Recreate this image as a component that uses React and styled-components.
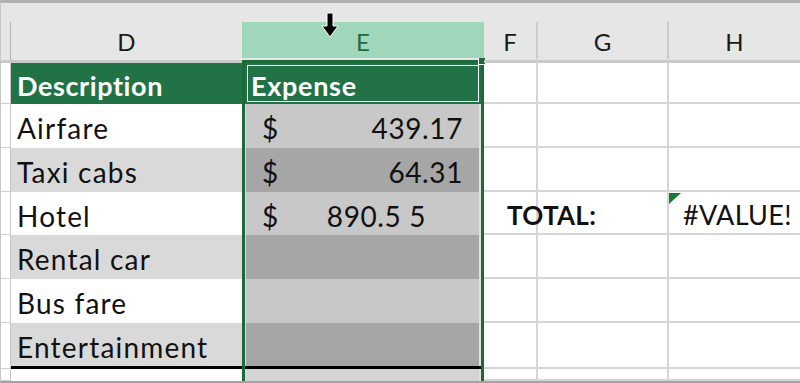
import React from 'react';
import styled, { createGlobalStyle } from 'styled-components';

const GREEN = '#217346';
const SEL = '#1b6a3a';
const GRID = '#d6d6d6';

const Global = createGlobalStyle`
  html, body { margin: 0; padding: 0; background: #fff; }
  body { font-family: Lato, "Open Sans", sans-serif; }
`;

const Frame = styled.div`
  width: 800px;
  height: 383px;
  box-sizing: border-box;
  border-top: 3px solid #b2b2b2;
  border-bottom: 2px solid #a4a4a4;
  border-left: 1px solid #c6c6c6;
  background: #fff;
  overflow: hidden;
`;

const Sheet = styled.div`
  display: grid;
  grid-template-columns: 10px 231px 242px 54px 131px 131px;
  grid-template-rows: 19px 38px 44px 44px 44px 43px 44px 44px 46px 12px;
`;

const Band = styled.div`
  grid-column: 1 / -1;
  background: #e6e6e6;
`;

const Corner = styled.div`
  background: #e6e6e6;
  border-right: 1px solid #b4b4b4;
`;

const Letter = styled.div`
  position: relative;
  display: flex;
  align-items: center;
  justify-content: center;
  padding-top: 4px;
  box-sizing: border-box;
  font-size: 24px;
  line-height: 1;
  background: ${(p) => (p.$active ? '#a0d6b9' : '#e6e6e6')};
  color: ${(p) => (p.$active ? '#1e6b3f' : '#1a1a1a')};
  border-right: ${(p) => (p.$sep ? '2px solid #cacaca' : 'none')};
  border-bottom: 2px solid #e6e6e6;
`;

const Cursor = styled.svg`
  position: absolute;
  left: 79px;
  top: -10px;
`;

const Stub = styled.div`
  background: #fff;
  border-right: 1px solid #c8c8c8;
  box-shadow: inset 0 -1px 0 #cfcfcf;
  border-top: ${(p) => (p.$head ? '3px solid #c9c9c9' : 'none')};
`;

const Text = styled.div`
  display: flex;
  align-items: center;
  box-sizing: border-box;
  padding-top: 4px;
  font-size: 28px;
  letter-spacing: 1.2px;
  line-height: 1;
  white-space: nowrap;
  color: #111;
`;

const Desc = styled(Text)`
  padding-left: 6px;
  background: ${(p) => (p.$head ? GREEN : p.$band ? '#d9d9d9' : '#fff')};
  color: ${(p) => (p.$head ? '#fff' : '#111')};
  font-weight: ${(p) => (p.$head ? 700 : 400)};
  font-size: ${(p) => (p.$head ? '27px' : '28px')};
  letter-spacing: ${(p) => (p.$head ? '0.6px' : '1.2px')};
  border-top: ${(p) => (p.$head ? '3px solid #c9c9c9' : 'none')};
  border-bottom: ${(p) => (p.$last ? '3px solid #000' : 'none')};
`;

const tones = {
  head: GREEN,
  light: '#c8c8c8',
  dark: '#a6a6a6',
  pale: '#d4d4d4',
};

const edgeShade = 'inset 1px 0 0 #d8d8d8, inset -2px 0 0 #e2e2e2';

const Expense = styled(Text)`
  position: relative;
  border-left: 3px solid ${SEL};
  border-right: 3px solid ${SEL};
  border-top: ${(p) => (p.$tone === 'head' ? `3px solid ${SEL}` : 'none')};
  background: ${(p) => tones[p.$tone]};
  color: ${(p) => (p.$tone === 'head' ? '#fff' : '#111')};
  font-weight: ${(p) => (p.$tone === 'head' ? 700 : 400)};
  font-size: ${(p) => (p.$tone === 'head' ? '27px' : '28px')};
  letter-spacing: ${(p) => (p.$tone === 'head' ? '0.7px' : '0.6px')};
  padding-left: ${(p) => (p.$tone === 'head' ? '6px' : '17px')};
  padding-right: 18px;
  box-shadow: ${(p) =>
    p.$tone === 'head'
      ? `inset 0 0 0 2px ${GREEN}, inset 0 0 0 3px #fff`
      : p.$last
      ? `inset 0 -3px 0 #000, ${edgeShade}`
      : edgeShade};
`;

const Dollar = styled.span`
  flex: none;
`;

const Amount = styled.span`
  flex: 1;
  text-align: ${(p) => (p.$indent ? 'left' : 'right')};
  padding-left: ${(p) => p.$indent || 0}px;
`;

const Handle = styled.div`
  position: absolute;
  right: -4px;
  top: -5px;
  width: 6px;
  height: 6px;
  background: ${SEL};
  border-left: 1px solid #fff;
  border-bottom: 1px solid #fff;
`;

const Plain = styled(Text)`
  position: relative;
  background: transparent;
  border-bottom: 2px solid ${GRID};
  border-right: ${(p) => (p.$edge ? 'none' : `2px solid ${GRID}`)};
  border-top: ${(p) => (p.$head ? '3px solid #c9c9c9' : 'none')};
  padding-left: ${(p) => p.$pad || 0}px;
  font-weight: ${(p) => (p.$bold ? 700 : 400)};
  font-size: ${(p) => (p.$bold ? '26px' : '27px')};
  letter-spacing: 0.3px;
`;

const ErrorMark = styled.svg`
  position: absolute;
  left: 0;
  top: 1px;
`;

const rows = [
  { d: 'Airfare', tone: 'light', amt: '439.17' },
  { d: 'Taxi cabs', tone: 'dark', amt: '64.31', band: true },
  { d: 'Hotel', tone: 'light', amt: '890.5 5', indent: 48, total: true },
  { d: 'Rental car', tone: 'dark', band: true },
  { d: 'Bus fare', tone: 'light' },
  { d: 'Entertainment', tone: 'dark', band: true, last: true },
];

export default function App() {
  return (
    <Frame>
      <Global />
      <Sheet>
        <Band />

        <Corner />
        <Letter>D</Letter>
        <Letter $active>
          E
          <Cursor width="18" height="26" viewBox="0 0 18 26">
            <path
              d="M6 1 H12 V14 H17 L9 25 L1 14 H6 Z"
              fill="#000"
              stroke="#fff"
              strokeWidth="1"
              strokeLinejoin="round"
            />
          </Cursor>
        </Letter>
        <Letter $sep>F</Letter>
        <Letter $sep>G</Letter>
        <Letter>H</Letter>

        <Stub $head />
        <Desc $head>Description</Desc>
        <Expense $tone="head">
          Expense
          <Handle />
        </Expense>
        <Plain $head />
        <Plain $head />
        <Plain $head $edge />

        {rows.map((r) => (
          <React.Fragment key={r.d}>
            <Stub />
            <Desc $band={r.band} $last={r.last}>
              {r.d}
            </Desc>
            <Expense $tone={r.tone} $last={r.last}>
              {r.amt && <Dollar>$</Dollar>}
              {r.amt && <Amount $indent={r.indent}>{r.amt}</Amount>}
            </Expense>
            <Plain $pad={23} $bold={r.total}>
              {r.total ? 'TOTAL:' : ''}
            </Plain>
            <Plain />
            <Plain $edge $pad={14}>
              {r.total && (
                <ErrorMark width="12" height="11" viewBox="0 0 12 11">
                  <path d="M0 0 H12 L0 11 Z" fill="#1d7a35" />
                </ErrorMark>
              )}
              {r.total ? '#VALUE!' : ''}
            </Plain>
          </React.Fragment>
        ))}

        <Stub />
        <Desc />
        <Expense $tone="pale" />
        <Plain />
        <Plain />
        <Plain $edge />
      </Sheet>
    </Frame>
  );
}
